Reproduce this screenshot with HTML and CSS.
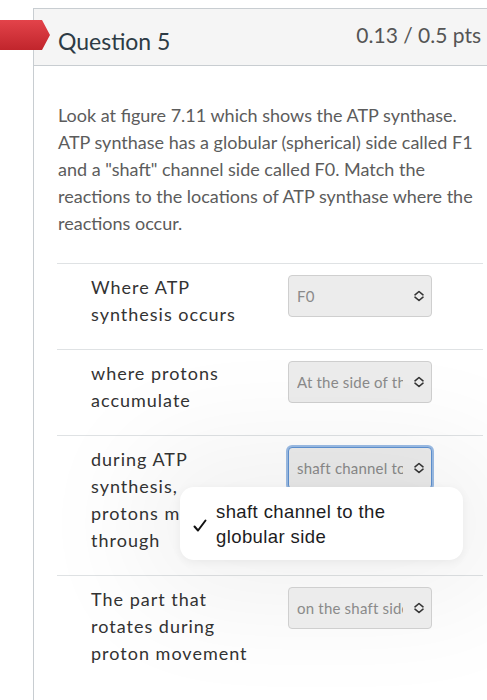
FILE: index.html
```html
<!DOCTYPE html>
<html>
<head>
<meta charset="utf-8">
<link rel="stylesheet" href="styles.css">
</head>
<body>
<div class="page">
  <div class="flag"></div>
  <div class="card">
    <div class="card-header">
      <span class="q-title">Question 5</span>
      <span class="q-points">0.13 / 0.5 pts</span>
    </div>
    <div class="card-body">
      <p class="prompt">Look at figure 7.11 which shows the ATP synthase. ATP synthase has a globular (spherical) side called F1 and a "shaft" channel side called F0. Match the reactions to the locations of ATP synthase where the reactions occur.</p>
      <div class="answers">
        <div class="row">
          <div class="label">Where ATP synthesis occurs</div>
          <div class="select-wrap">
            <div class="select"><span class="sel-text">F0</span><svg class="chev" width="12" height="12" viewBox="0 0 12 12"><path d="M2 4.8 L6 1.5 L10 4.8 M2 7.2 L6 10.5 L10 7.2" fill="none" stroke="#333" stroke-width="1.6" stroke-linecap="round" stroke-linejoin="round"/></svg></div>
          </div>
        </div>
        <div class="row">
          <div class="label">where protons accumulate</div>
          <div class="select-wrap">
            <div class="select"><span class="sel-text">At the side of the membrane</span><svg class="chev" width="12" height="12" viewBox="0 0 12 12"><path d="M2 4.8 L6 1.5 L10 4.8 M2 7.2 L6 10.5 L10 7.2" fill="none" stroke="#333" stroke-width="1.6" stroke-linecap="round" stroke-linejoin="round"/></svg></div>
          </div>
        </div>
        <div class="row row-open">
          <div class="label">during ATP synthesis, protons move through</div>
          <div class="select-wrap">
            <div class="select focused"><span class="sel-text">shaft channel to the globular side</span><svg class="chev" width="12" height="12" viewBox="0 0 12 12"><path d="M2 4.8 L6 1.5 L10 4.8 M2 7.2 L6 10.5 L10 7.2" fill="none" stroke="#333" stroke-width="1.6" stroke-linecap="round" stroke-linejoin="round"/></svg></div>
            <div class="popup">
              <svg class="check" width="14" height="14" viewBox="0 0 14 14"><path d="M1.5 7.5 L5 11.5 L12.5 1.5" fill="none" stroke="#111" stroke-width="2" stroke-linecap="round" stroke-linejoin="round"/></svg>
              <span class="opt-text">shaft channel to the globular side</span>
            </div>
          </div>
        </div>
        <div class="row">
          <div class="label">The part that rotates during proton movement</div>
          <div class="select-wrap">
            <div class="select"><span class="sel-text">on the shaft side</span><svg class="chev" width="12" height="12" viewBox="0 0 12 12"><path d="M2 4.8 L6 1.5 L10 4.8 M2 7.2 L6 10.5 L10 7.2" fill="none" stroke="#333" stroke-width="1.6" stroke-linecap="round" stroke-linejoin="round"/></svg></div>
          </div>
        </div>
      </div>
    </div>
  </div>
</div>
</body>
</html>
```
FILE: styles.css
```css
html, body {
  margin: 0;
  padding: 0;
  background: #ffffff;
}
body {
  font-family: Lato, "Open Sans", sans-serif;
  width: 487px;
  height: 700px;
  overflow: hidden;
}
.page {
  position: relative;
  padding-top: 8px;
}
.flag {
  position: absolute;
  left: 0;
  top: 20px;
  width: 50px;
  height: 30px;
  background: linear-gradient(#e3434a, #c1252c);
  clip-path: polygon(0 0, 42px 0, 50px 15px, 42px 30px, 0 30px);
}
.card {
  margin-left: 33px;
  border-left: 1px solid #c8cdd1;
  border-top: 1px solid #c8cdd1;
  min-height: 700px;
}
.card-header {
  height: 56px;
  background: #f5f5f5;
  border-bottom: 1px solid #c8cdd1;
  display: flex;
  align-items: center;
  justify-content: space-between;
  padding: 0 6px 0 24px;
}
.q-title {
  font-size: 23px;
  color: #2d3b45;
  padding-top: 7px;
}
.q-points {
  font-size: 21px;
  color: #555;
  padding-bottom: 5px;
}
.card-body {
  padding: 36px 4px 0 23px;
}
.prompt {
  margin: 0 10px 26px 1px;
  font-size: 18px;
  line-height: 27px;
  color: #5c5c5c;
}
.answers {
  display: flex;
  flex-direction: column;
}
.row {
  border-top: 1px solid #dfe2e4;
  display: flex;
  padding: 10px 0 21px 34px;
}
.label {
  flex: none;
  width: 157px;
  font-size: 18px;
  line-height: 27px;
  color: #333;
  letter-spacing: 1px;
}
.select-wrap {
  position: relative;
  margin-left: 40px;
  padding-top: 1px;
}
.select {
  height: 40px;
  background: #ececec;
  border: 1px solid #cfcfcf;
  border-radius: 4px;
  display: flex;
  align-items: center;
  padding-left: 8px;
  box-sizing: content-box;
  width: 134px;
}
.select.focused {
  border-color: #5f92d2;
  box-shadow: 0 0 0 2px #9cbde6;
}
.sel-text {
  width: 106px;
  overflow: hidden;
  white-space: nowrap;
  font-size: 15px;
  letter-spacing: 0.2px;
  color: #8a8a8a;
}
.chev {
  margin-left: 10px;
}
.popup {
  position: absolute;
  left: -108px;
  top: 41px;
  width: 283px;
  height: 73px;
  box-sizing: border-box;
  background: #ffffff;
  border-radius: 14px;
  box-shadow: 0 2px 10px rgba(0,0,0,0.06), 0 0 120px 40px rgba(0,0,0,0.06);
  display: flex;
  align-items: center;
  padding-left: 13px;
}
.check {
  flex: none;
  margin-top: 4px;
}
.opt-text {
  margin-left: 9px;
  width: 220px;
  font-family: "Liberation Sans", Arial, sans-serif;
  font-size: 18.5px;
  letter-spacing: 0.4px;
  line-height: 25px;
  color: #1c1c1e;
}
```
